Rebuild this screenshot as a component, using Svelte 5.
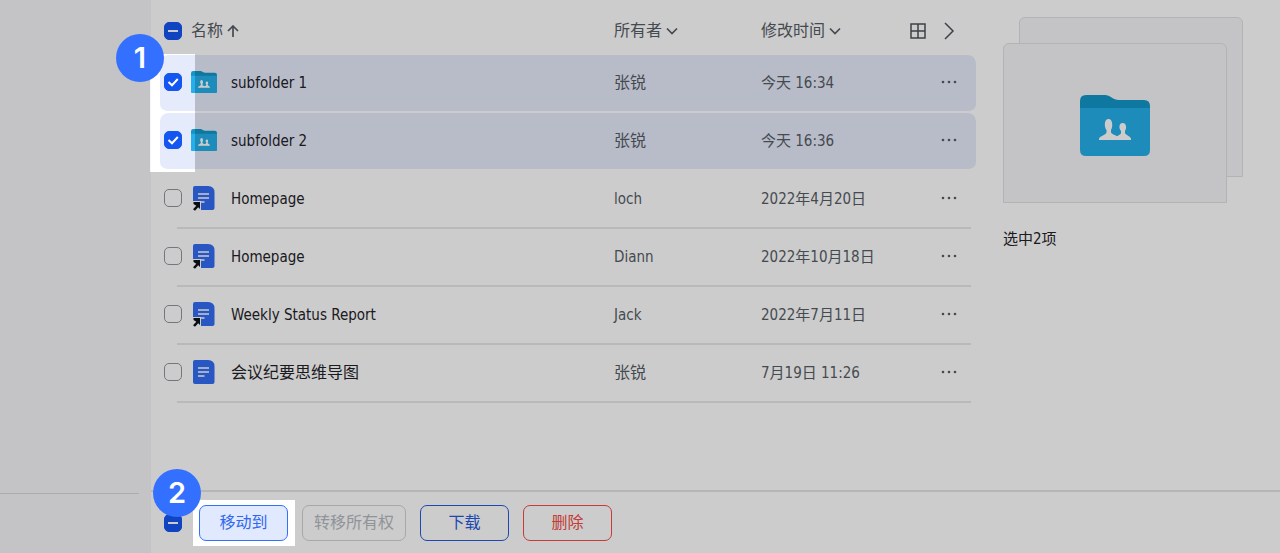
<script>
  let files = $state([
    { name: 'subfolder 1', owner: '张锐', time: '今天 16:34', kind: 'folder', checked: true },
    { name: 'subfolder 2', owner: '张锐', time: '今天 16:36', kind: 'folder', checked: true },
    { name: 'Homepage', owner: 'loch', time: '2022年4月20日', kind: 'shortcut', checked: false },
    { name: 'Homepage', owner: 'Diann', time: '2022年10月18日', kind: 'shortcut', checked: false },
    { name: 'Weekly Status Report', owner: 'Jack', time: '2022年7月11日', kind: 'shortcut', checked: false },
    { name: '会议纪要思维导图', owner: '张锐', time: '7月19日 11:26', kind: 'doc', checked: false }
  ]);

  let count = $derived(files.filter((f) => f.checked).length);
  let all = $derived(count === files.length);
  let some = $derived(count > 0 && !all);

  function toggleAll() {
    const next = !all;
    files.forEach((f) => (f.checked = next));
  }
</script>

{#snippet folder()}
  <svg viewBox="0 0 70 61" aria-hidden="true">
    <path fill="#1296c9" d="M0 20V6Q0 0 6 0H25C30 0 33 5 39 5H64Q70 5 70 11V20Z" />
    <path fill="#26b0e9" d="M0 13H70V55Q70 61 64 61H6Q0 61 0 55Z" />
    <path fill="#fff" d="M19 45V43.500C20 41 26 40 26.500 37.500V35C24 32 24 24 28.500 24S33 32 31 35V37.500C31.500 39 35 40 37 41.200C38.500 40.300 41 39.500 41 38V36C38.500 33 39 28 42.700 28S47 33 45 36V38C45.500 40 50 41 51 43.500V45Z" />
  </svg>
{/snippet}

{#snippet doc(shortcut)}
  <svg viewBox="0 0 24 26" aria-hidden="true">
    <path fill="#336df4" d="M1 3Q1 1 3 1H16Q22.500 1 22.500 7.500V23Q22.500 25 20.500 25H3Q1 25 1 23Z" />
    <path stroke="#fff" stroke-width="1.400" d="M6 9H17M6 13H17M6 17H12.500" />
    {#if shortcut}
      <path fill="#fff" d="M0 16H9V26H0Z" />
      <path fill="#101114" d="M1.500 17H8V24L6.200 22.300L3 25.800L1 24.200L4.300 20.700L1.500 19Z" />
    {/if}
  </svg>
{/snippet}

{#snippet down()}
  <svg class="glyph" viewBox="0 0 12 12" aria-hidden="true"><path d="M1 3.500L6 8.500L11 3.500" /></svg>
{/snippet}

<div class="page">
  <aside><div class="rule"></div></aside>

  <main>
    <div class="content">
      <table>
        <thead>
          <tr>
            <th class="pick">
              <input type="checkbox" aria-label="全选" checked={all} indeterminate={some} onchange={toggleAll} />
            </th>
            <th class="name">
              <button class="sort">名称
                <svg class="glyph" viewBox="0 0 12 12" aria-hidden="true"><path d="M6 12V1M1 6L6 1L11 6" /></svg>
              </button>
            </th>
            <th class="owner"><button class="sort">所有者{@render down()}</button></th>
            <th class="time"><button class="sort">修改时间{@render down()}</button></th>
            <th class="tools">
              <div>
                <button aria-label="网格视图">
                  <svg viewBox="0 0 18 18" aria-hidden="true"><path d="M2 2H16V16H2ZM9 2V16M2 9H16" /></svg>
                </button>
                <button aria-label="收起">
                  <svg viewBox="0 0 18 18" aria-hidden="true"><path d="M5 1L13 9L5 17" /></svg>
                </button>
              </div>
            </th>
          </tr>
        </thead>
        <tbody>
          {#each files as file, i}
            <tr class:selected={file.checked}>
              <td class="pick"><input id="file-{i}" type="checkbox" bind:checked={file.checked} /></td>
              <td class="name">
                <label for="file-{i}">
                  <span class="icon">
                    {#if file.kind === 'folder'}{@render folder()}{:else}{@render doc(file.kind === 'shortcut')}{/if}
                  </span>
                  <span class="title" class:cjk={file.kind === 'doc'}>{file.name}</span>
                </label>
              </td>
              <td class="owner" class:cjk={file.owner === '张锐'}>{file.owner}</td>
              <td class="time">{file.time}</td>
              <td class="tools">
                <div>
                  <button aria-label="更多">
                    <svg class="dots" viewBox="0 0 18 18" aria-hidden="true">
                      <circle cx="3" cy="9" r="1.300" /><circle cx="9" cy="9" r="1.300" /><circle cx="15" cy="9" r="1.300" />
                    </svg>
                  </button>
                </div>
              </td>
            </tr>
          {/each}
        </tbody>
      </table>

      <section class="preview">
        <div class="stack">
          <div class="card back"></div>
          <div class="card front">{@render folder()}</div>
        </div>
        <p>选中{count}项</p>
      </section>
    </div>

    <footer>
      <input type="checkbox" aria-label="全选" checked={all} indeterminate={some} onchange={toggleAll} />
      <div class="actions">
        <button class="move">移动到</button>
        <button disabled>转移所有权</button>
        <button class="download">下载</button>
        <button class="delete">删除</button>
      </div>
    </footer>
  </main>

  <div class="dim"></div>
  <span class="step one">1</span>
  <span class="step two">2</span>
</div>

<style>
  :global(body) {
    margin: 0;
  }
  .page {
    position: relative;
    display: flex;
    min-height: 100vh;
    overflow: hidden;
    background: #fff;
    color: #1f2329;
    font: 15px/24px 'DejaVu Sans Condensed', 'Noto Sans CJK SC', sans-serif;
  }
  * {
    box-sizing: border-box;
  }
  button {
    font: inherit;
    color: inherit;
    cursor: pointer;
  }
  svg {
    display: block;
    fill: none;
  }
  aside {
    display: flex;
    align-items: flex-end;
    flex: none;
    width: 151px;
    padding: 0 12px 59px 0;
    background: #f5f6f8;
  }
  .rule {
    flex: 1;
    height: 1px;
    background: #d5d7da;
  }
  main {
    display: flex;
    flex: 1;
    flex-direction: column;
    min-width: 0;
  }
  .content {
    display: flex;
    flex: 1;
    align-items: flex-start;
    gap: 27px;
    padding: 0 37px 0 9px;
  }
  table {
    flex: 1;
    min-width: 0;
    border-spacing: 0;
    table-layout: fixed;
  }
  th,
  td {
    padding: 0;
    text-align: left;
    font-weight: 400;
    color: #575d66;
  }
  th {
    height: 55px;
    padding-top: 6px;
    font-size: 16px;
  }
  td {
    height: 58px;
    border-bottom: 2px solid transparent;
    background-clip: padding-box;
  }
  tbody tr {
    position: relative;
  }
  tbody tr:not(.selected)::after {
    content: '';
    position: absolute;
    left: 17px;
    right: 5px;
    bottom: 0;
    height: 2px;
    background: #e7e8e9;
  }
  .selected td {
    background-color: #e6ebfb;
  }
  .selected td:first-child {
    border-radius: 8px 0 0 8px;
  }
  .selected td:last-child {
    border-radius: 0 8px 8px 0;
  }
  .pick {
    width: 31px;
    padding-left: 4px;
  }
  .owner {
    width: 147px;
  }
  .time {
    width: 140px;
  }
  .tools {
    width: 75px;
    padding-right: 18px;
  }
  td.pick,
  td.tools {
    padding-bottom: 2px;
  }
  .tools div {
    display: flex;
    justify-content: flex-end;
    gap: 13px;
  }
  .tools button,
  .sort {
    padding: 0;
    border: 0;
    background: none;
  }
  .tools svg {
    width: 18px;
    height: 18px;
    stroke: #4c525b;
    stroke-width: 1.500;
  }
  .tools .dots {
    fill: #575d66;
    stroke: none;
  }
  .sort {
    display: flex;
    align-items: center;
    gap: 4px;
  }
  .glyph {
    width: 12px;
    height: 12px;
    stroke: #575d66;
    stroke-width: 1.700;
  }
  td .cjk,
  td.cjk {
    font-size: 16px;
  }
  label {
    display: flex;
    align-items: center;
    gap: 14px;
    color: #1f2329;
  }
  .icon {
    display: grid;
    place-items: center;
    width: 26px;
    height: 26px;
    margin-bottom: 2px;
  }
  .icon svg {
    width: 26px;
    max-height: 26px;
  }
  input {
    display: block;
    appearance: none;
    flex: none;
    width: 18px;
    height: 18px;
    margin: 0;
    border: 1px solid #8f959e;
    border-radius: 5px;
    background: #fff center / 18px 18px no-repeat;
  }
  input:checked,
  input:indeterminate {
    border-color: #1456f0;
    background-color: #1456f0;
  }
  input:checked {
    background-image: url("data:image/svg+xml,%3Csvg xmlns='http://www.w3.org/2000/svg' viewBox='0 0 18 18'%3E%3Cpath d='M4.500 9L8 12.300L13.800 6' fill='none' stroke='white' stroke-width='2'/%3E%3C/svg%3E");
  }
  input:indeterminate {
    background-image: url("data:image/svg+xml,%3Csvg xmlns='http://www.w3.org/2000/svg' viewBox='0 0 18 18'%3E%3Cpath d='M4 9H14' stroke='white' stroke-width='2'/%3E%3C/svg%3E");
  }
  .preview {
    flex: none;
    width: 240px;
    padding-top: 17px;
  }
  .stack {
    display: grid;
  }
  .card {
    grid-area: 1 / 1;
    width: 224px;
    height: 160px;
    border: 1px solid #dee0e3;
    border-radius: 6px 6px 0 0;
    background: #f5f6f8;
  }
  .back {
    justify-self: end;
  }
  .front {
    display: grid;
    place-items: center;
    margin-top: 26px;
    padding-top: 4px;
  }
  .front svg {
    width: 70px;
    height: 61px;
  }
  p {
    margin: 24px 0 0;
  }
  footer {
    display: flex;
    align-items: center;
    gap: 17px;
    height: 63px;
    padding: 0 13px;
    border-top: 2px solid #e3e4e6;
  }
  .actions {
    display: flex;
    gap: 14px;
    font-size: 16px;
  }
  .actions button {
    min-width: 89px;
    height: 36px;
    padding: 0 11px;
    border: 1px solid currentColor;
    border-radius: 7px;
    background: #fff;
  }
  .actions button:disabled {
    border-color: #d0d3d6;
    color: #b4b9c0;
    cursor: default;
  }
  .actions .move {
    border-color: #3370ff;
    background: #e1e9ff;
    color: #2f68ee;
  }
  .actions .download {
    color: #245bdb;
  }
  .actions .delete {
    color: #f54a45;
  }
  /* Dims the page except for the two guided areas. */
  .dim {
    position: absolute;
    inset: 0;
    background: rgb(0 0 0 / 20%);
    pointer-events: none;
    clip-path: polygon(
      evenodd,
      0 0, 100% 0, 100% 100%, 0 100%, 0 0,
      150px 54px, 195px 54px, 195px 172px, 150px 172px, 150px 54px,
      0 0,
      193px calc(100% - 53px), 295px calc(100% - 53px), 295px calc(100% - 7px), 193px calc(100% - 7px), 193px calc(100% - 53px),
      0 0
    );
  }
  .step {
    position: absolute;
    display: grid;
    place-items: center;
    width: 48px;
    height: 48px;
    border-radius: 50%;
    background: #3370ff;
    color: #fff;
    font: 600 29px/48px Inter, sans-serif;
  }
  .one {
    left: 116px;
    top: 34px;
  }
  .two {
    left: 153px;
    bottom: 36px;
  }
</style>
